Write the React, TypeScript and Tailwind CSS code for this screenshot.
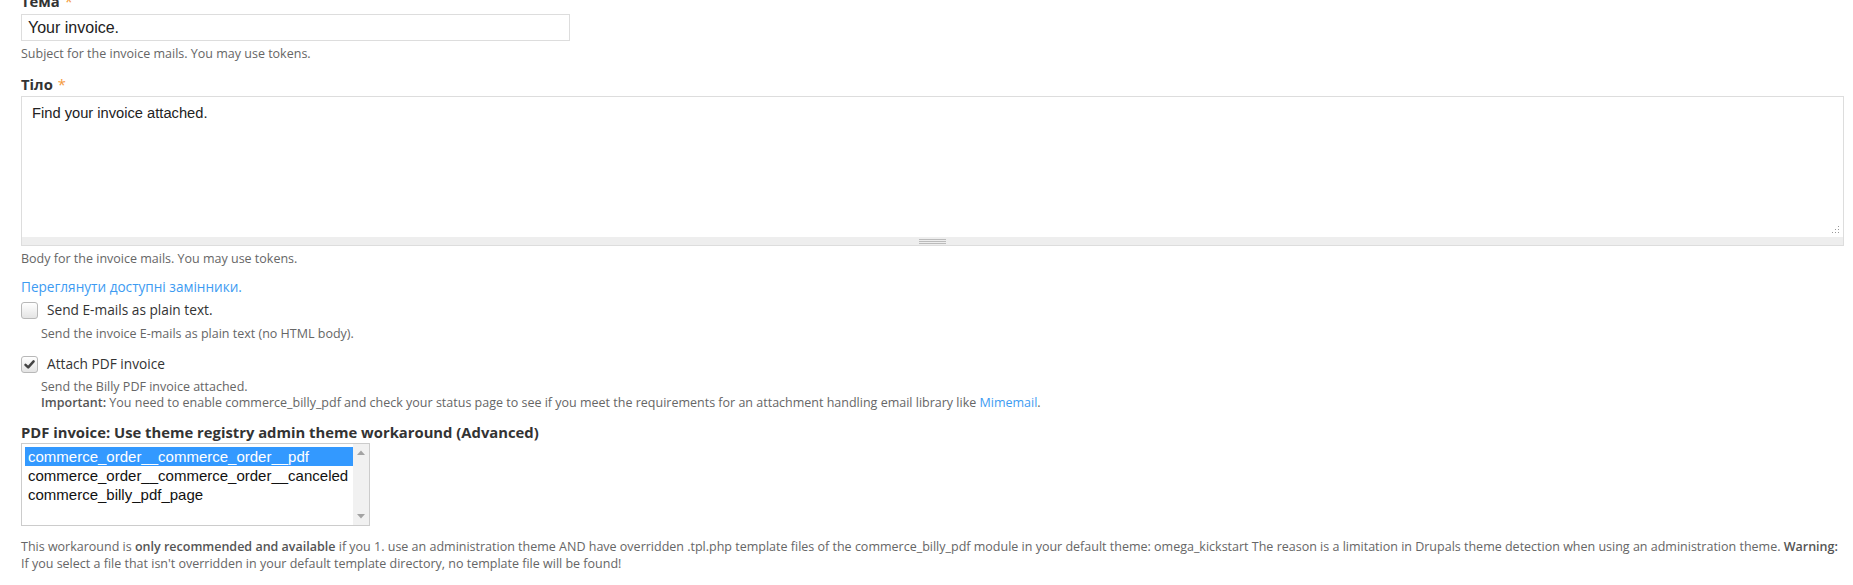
import React from "react";

const items = [
  "commerce_order__commerce_order__pdf",
  "commerce_order__commerce_order__canceled",
  "commerce_billy_pdf_page",
];

function Req() {
  return <span className="ml-[5px] font-normal text-[#f59a3c]">*</span>;
}

function CheckBox({ checked }: { checked?: boolean }) {
  return (
    <span className="flex h-[17px] w-[17px] shrink-0 items-center justify-center rounded-[3px] border border-[#b8b8b8] bg-linear-to-b from-white to-[#e4e4e4]">
      {checked && (
        <svg width="13" height="13" viewBox="0 0 13 13">
          <path d="M2.5 6.8 L5.2 9.4 L10.6 3.4" fill="none" stroke="#444" strokeWidth="2.5" strokeLinecap="round" strokeLinejoin="round" />
        </svg>
      )}
    </span>
  );
}

export default function App() {
  const [selected, setSelected] = React.useState(0);

  return (
    <div className="min-h-[585px] overflow-hidden bg-white pl-[21px] pr-[9px] font-['Open_Sans',sans-serif] text-[#333]">
      <div className="mt-[-8px]">
        {/* Тема */}
        <label className="block text-[14.8px] font-bold leading-[18px]">
          Тема<Req />
        </label>
        <div className="mt-[4px] flex h-[27px] w-[549px] items-center border border-[#ddd] px-[6px] font-['Liberation_Sans',Arial,sans-serif] text-[16px] text-[#222]">
          Your invoice.
        </div>
        <div className="mt-[5px] text-[12.5px] leading-[16px] text-[#666]">
          Subject for the invoice mails. You may use tokens.
        </div>

        {/* Тіло */}
        <label className="mt-[13px] block text-[14.8px] font-bold leading-[18px]">
          Тіло<Req />
        </label>
        <div className="mt-[3px] w-full">
          <div className="relative h-[141px] border border-b-0 border-[#ddd] px-[10px] pt-[5px] font-['Liberation_Sans',Arial,sans-serif] text-[14.7px] text-[#222]">
            Find your invoice attached.
            <svg className="absolute right-[3px] bottom-[3px]" width="9" height="9" viewBox="0 0 9 9">
              <g fill="#999">
                <rect x="7" y="1" width="1" height="1" />
                <rect x="4" y="4" width="1" height="1" />
                <rect x="7" y="4" width="1" height="1" />
                <rect x="1" y="7" width="1" height="1" />
                <rect x="4" y="7" width="1" height="1" />
                <rect x="7" y="7" width="1" height="1" />
              </g>
            </svg>
          </div>
          <div className="flex h-[9px] items-center justify-center border border-t-0 border-[#ddd] bg-[#eee]">
            <div className="flex w-[27px] flex-col gap-[1px]">
              <span className="h-px bg-[#bbb]" />
              <span className="h-px bg-[#bbb]" />
              <span className="h-px bg-[#bbb]" />
            </div>
          </div>
        </div>
        <div className="mt-[5px] text-[12.5px] leading-[16px] text-[#666]">
          Body for the invoice mails. You may use tokens.
        </div>

        <a href="#" className="mt-[11px] block w-fit text-[13.6px] leading-[18px] text-[#3d9bf2]">
          Переглянути доступні замінники.
        </a>

        {/* plain text */}
        <div className="mt-[5px] flex h-[18px] items-center gap-[9px]">
          <CheckBox />
          <span className="text-[13.7px]">Send E-mails as plain text.</span>
        </div>
        <div className="mt-[7px] pl-[20px] text-[12.5px] leading-[16px] text-[#666]">
          Send the invoice E-mails as plain text (no HTML body).
        </div>

        {/* attach */}
        <div className="mt-[13px] flex h-[18px] items-center gap-[9px]">
          <CheckBox checked />
          <span className="text-[13.7px]">Attach PDF invoice</span>
        </div>
        <div className="mt-[6px] pl-[20px] text-[12.5px] leading-[16px] text-[#666]">
          <div>Send the Billy PDF invoice attached.</div>
          <div>
            <span className="font-semibold text-[#555]">Important:</span> You need to enable commerce_billy_pdf and check your status page to see if you meet the requirements for an attachment handling email library like{" "}
            <a href="#" className="text-[#3d9bf2]">Mimemail</a>.
          </div>
        </div>

        {/* theme registry */}
        <label className="mt-[12px] block text-[14.8px] font-bold leading-[18px]">
          PDF invoice: Use theme registry admin theme workaround (Advanced)
        </label>
        <div className="mt-[2px] flex h-[83px] w-[349px] border border-[#ccc] font-['Liberation_Sans',Arial,sans-serif] text-[15px] text-[#111]">
          <div className="flex-1 pt-[3px] pl-[3px]">
            {items.map((it, i) => (
              <div
                key={it}
                onClick={() => setSelected(i)}
                className={
                  "h-[19px] pl-[3px] leading-[19px] " +
                  (i === selected ? "bg-[#3399ff] text-white" : "")
                }
              >
                {it}
              </div>
            ))}
          </div>
          <div className="flex w-[16px] flex-col items-center justify-between bg-[#f1f1f1] py-[6px]">
            <svg width="8" height="5" viewBox="0 0 8 5">
              <path d="M0 5 L4 0.5 L8 5 Z" fill="#a3a3a3" />
            </svg>
            <svg width="8" height="5" viewBox="0 0 8 5">
              <path d="M0 0 L8 0 L4 4.5 Z" fill="#a3a3a3" />
            </svg>
          </div>
        </div>
        <div className="mt-[12px] text-[12.5px] leading-[17px] text-[#666]">
          This workaround is <span className="font-semibold text-[#555]">only recommended and available</span> if you 1. use an administration theme AND have overridden .tpl.php template files of the commerce_billy_pdf module in your default theme: omega_kickstart The reason is a limitation in Drupals theme detection when using an administration theme.{" "}
          <span className="font-semibold text-[#555]">Warning:</span> If you select a file that isn't overridden in your default template directory, no template file will be found!
        </div>
      </div>
    </div>
  );
}
